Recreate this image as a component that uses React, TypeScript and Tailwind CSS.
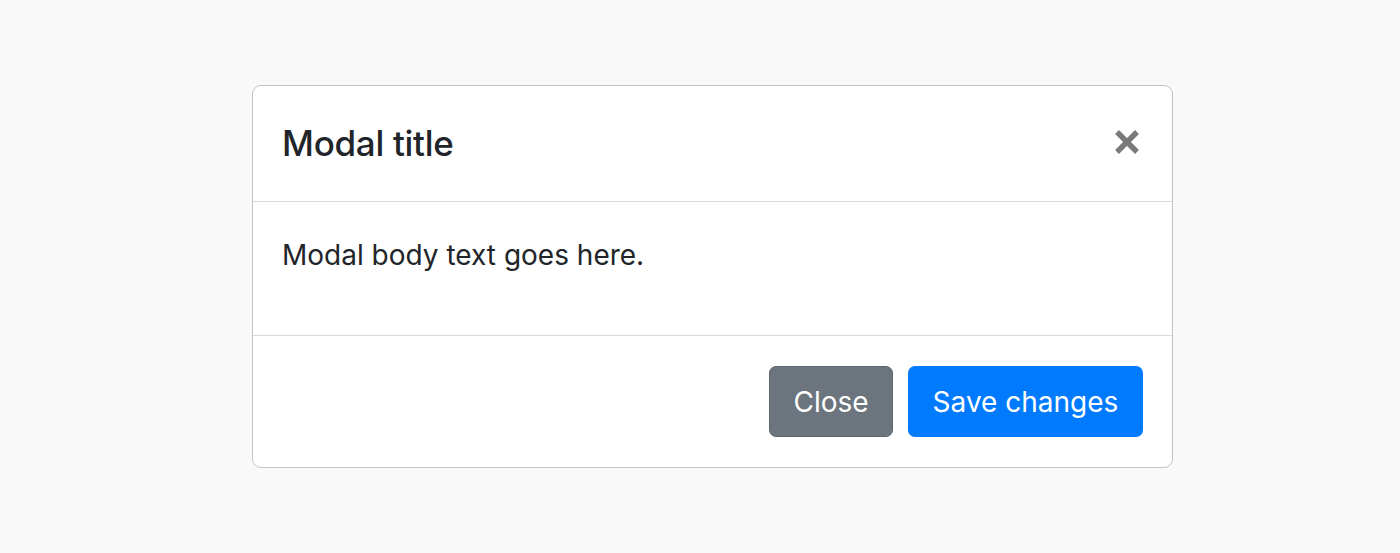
import React from "react";

export default function App() {
  return (
    <div className="w-[1400px] h-[553px] bg-[#f9f9f9] flex pl-[252px] pt-[85px]" style={{ fontFamily: "Inter, 'Noto Sans', sans-serif" }}>
      <div className="w-[921px] h-[383px] bg-white border border-[#c4c4c4] rounded-[9px] flex flex-col">
        <div className="h-[116px] flex items-center justify-between pl-[29px] pr-[32px] border-b border-[#d6d9de]">
          <h5 className="text-[35px] font-medium text-[#212529] tracking-[-0.3px] leading-none">Modal title</h5>
          <svg width="26" height="26" viewBox="0 0 26 26" className="mt-[-3px]">
            <path d="M3 3 L23 23 M23 3 L3 23" stroke="#7a7a7a" strokeWidth="5.5" strokeLinecap="butt" />
          </svg>
        </div>
        <div className="h-[134px] pl-[29px] pt-[39px] border-b border-[#d6d9de]">
          <p className="text-[28px] text-[#212529] leading-none">Modal body text goes here.</p>
        </div>
        <div className="flex-1 flex items-center justify-end gap-[15px] pr-[29px]">
          <button className="w-[124px] h-[71px] bg-[#6c757d] border border-[#5f676e] text-white text-[28px] rounded-[7px]">Close</button>
          <button className="w-[235px] h-[71px] bg-[#007bff] text-white text-[28px] rounded-[7px]">Save changes</button>
        </div>
      </div>
    </div>
  );
}
